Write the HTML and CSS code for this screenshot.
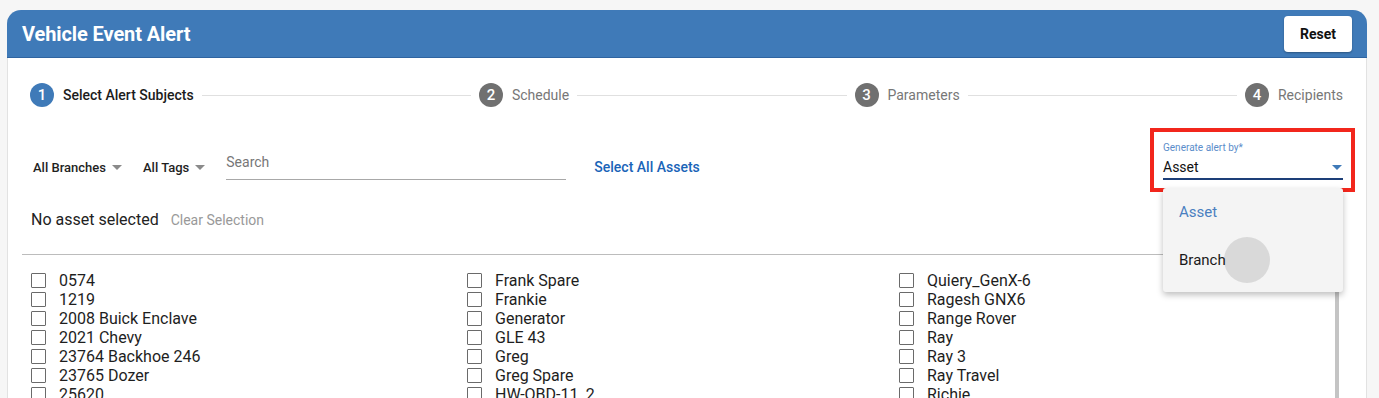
FILE: index.html
```html
<!DOCTYPE html>
<html lang="en">
<head>
<meta charset="UTF-8">
<title>Vehicle Event Alert</title>
<link rel="stylesheet" href="styles.css">
</head>
<body>

<div class="card">
    <div class="card-header">
        <h1 class="title">Vehicle Event Alert</h1>
        <button class="reset">Reset</button>
    </div>

    <div class="stepper">
        <div class="step active"><span class="step-num">1</span>Select Alert Subjects</div>
        <div class="step-line"></div>
        <div class="step"><span class="step-num">2</span>Schedule</div>
        <div class="step-line"></div>
        <div class="step"><span class="step-num">3</span>Parameters</div>
        <div class="step-line"></div>
        <div class="step"><span class="step-num">4</span>Recipients</div>
    </div>

    <div class="filters">
        <div class="filter-left">
            <div class="picker">All Branches <span class="caret"></span></div>
            <div class="picker">All Tags <span class="caret"></span></div>
            <input type="text" class="search" placeholder="Search">
            <a class="select-all" href="#">Select All Assets</a>
        </div>

        <div class="highlight">
            <div class="field">
                <label class="field-label">Generate alert by*</label>
                <div class="field-value">Asset <span class="caret blue"></span></div>
                <ul class="menu">
                    <li class="menu-item selected">Asset</li>
                    <li class="menu-item"><span class="ripple"></span><span class="menu-text">Branch</span></li>
                </ul>
            </div>
        </div>
    </div>

    <div class="selection">
        <span class="sel-text">No asset selected</span>
        <span class="clear">Clear Selection</span>
    </div>

    <div class="divider"></div>

    <div class="list-wrap">
        <div class="asset-list" id="assetList"></div>
        <div class="scroll-thumb"></div>
    </div>
</div>

<script>
const columns = [
    ['0574', '1219', '2008 Buick Enclave', '2021 Chevy', '23764 Backhoe 246', '23765 Dozer', '25620'],
    ['Frank Spare', 'Frankie', 'Generator', 'GLE 43', 'Greg', 'Greg Spare', 'HW-OBD-11_2'],
    ['Quiery_GenX-6', 'Ragesh GNX6', 'Range Rover', 'Ray', 'Ray 3', 'Ray Travel', 'Richie']
];

const list = document.getElementById('assetList');
columns.forEach(function(col) {
    const colEl = document.createElement('div');
    colEl.className = 'asset-col';
    col.forEach(function(name) {
        const row = document.createElement('label');
        row.className = 'asset';
        row.innerHTML = '<span class="box"></span><span>' + name + '</span>';
        colEl.appendChild(row);
    });
    list.appendChild(colEl);
});
</script>

</body>
</html>
```

FILE: styles.css
```css
body {
    margin: 0;
    padding: 10px 0 0 7px;
    height: 388px;
    overflow: hidden;
    background-color: #f6f6f6;
    font-family: Roboto, 'Noto Sans', Arial, sans-serif;
    color: #222;
}

.card {
    width: 1358px;
    min-height: 600px;
    background-color: #fff;
    border: 1px solid #e2e2e2;
    border-top: none;
    border-radius: 14px 14px 0 0;
}

.card-header {
    display: flex;
    align-items: center;
    justify-content: space-between;
    height: 48px;
    padding: 0 15px 0 15px;
    background-color: #3f7ab8;
    border-radius: 14px 14px 0 0;
    margin: 0 -1px;
    border-bottom: 1px solid #2f64a0;
    box-sizing: border-box;
}

.title {
    margin: 0;
    color: #fff;
    font-size: 20px;
    font-weight: 700;
    letter-spacing: -0.1px;
}

.reset {
    width: 68px;
    height: 36px;
    border: none;
    border-radius: 4px;
    background-color: #fff;
    color: #111;
    font-family: Roboto, Arial, sans-serif;
    font-size: 14px;
    font-weight: 700;
    box-shadow: 0 1px 2px rgba(0, 0, 0, 0.3);
}

/* stepper */
.stepper {
    display: flex;
    align-items: center;
    margin: 25px 23px 0 22px;
    height: 24px;
}

.step {
    display: flex;
    align-items: center;
    font-size: 14px;
    color: #777;
}

.step.active {
    color: #1c1c1c;
    font-weight: 500;
}

.step-num {
    display: inline-flex;
    align-items: center;
    justify-content: center;
    width: 24px;
    height: 24px;
    margin-right: 9px;
    border-radius: 50%;
    background-color: #707070;
    color: #fff;
    font-size: 15px;
    font-weight: 500;
}

.step.active .step-num {
    background-color: #3f7ab8;
}

.step-line {
    flex: 1;
    height: 1px;
    margin: 0 8px;
    background-color: #e0e0e0;
}

/* filters */
.filters {
    display: flex;
    align-items: center;
    justify-content: space-between;
    margin: 21px 11px 0 25px;
}

.filter-left {
    display: flex;
    align-items: center;
    margin-top: 14px;
}

.picker {
    display: flex;
    align-items: center;
    font-size: 13px;
    font-weight: 500;
    color: #1f1f1f;
    margin-right: 21px;
}

.caret {
    display: inline-block;
    width: 0;
    height: 0;
    margin-left: 6px;
    border-left: 5px solid transparent;
    border-right: 5px solid transparent;
    border-top: 5px solid #8a8a8a;
}

.caret.blue {
    border-top-color: #3f7ab8;
}

.search {
    width: 340px;
    height: 34px;
    margin: -10px 0 0 0;
    padding: 0;
    border: none;
    border-bottom: 1px solid #a8a8a8;
    font-family: Roboto, Arial, sans-serif;
    font-size: 14px;
    outline: none;
}

.search::placeholder {
    color: #777;
}

.select-all {
    margin-left: 28px;
    color: #1a64b8;
    font-size: 14px;
    font-weight: 500;
    text-decoration: none;
}

.highlight {
    position: relative;
    border: 4px solid #f2261c;
    padding: 10px 8px 8px 9px;
}

.field {
    position: relative;
    width: 180px;
}

.field-label {
    display: block;
    font-size: 10px;
    color: #5b8dca;
    line-height: 12px;
}

.field-value {
    display: flex;
    align-items: center;
    justify-content: space-between;
    height: 22px;
    padding-top: 2px;
    font-size: 14px;
    color: #111;
    border-bottom: 2px solid #1d3f78;
}

.field-value .caret {
    margin-right: 1px;
}

.menu {
    position: absolute;
    top: 46px;
    left: 0;
    width: 180px;
    margin: 0;
    padding: 0 0 8px;
    list-style: none;
    background-color: #f4f4f4;
    border-radius: 3px;
    box-shadow: 0 3px 6px rgba(0, 0, 0, 0.25);
    z-index: 2;
}

.menu-item {
    position: relative;
    height: 48px;
    line-height: 48px;
    padding-left: 16px;
    font-size: 15px;
    color: #1a1a1a;
}

.menu-item.selected {
    color: #4a7fc0;
}

.ripple {
    position: absolute;
    left: 61px;
    top: 1px;
    width: 46px;
    height: 46px;
    border-radius: 50%;
    background-color: #d9d9d9;
}

.menu-text {
    position: relative;
}

/* selection summary */
.selection {
    display: flex;
    align-items: baseline;
    margin: 18px 0 0 23px;
}

.sel-text {
    font-size: 16px;
    color: #222;
}

.clear {
    margin-left: 12px;
    font-size: 14px;
    color: #999;
}

.divider {
    height: 1px;
    margin: 25px 26px 0 14px;
    background-color: #bcbcbc;
}

/* asset list */
.list-wrap {
    display: flex;
    margin: 16px 0 0 23px;
}

.asset-list {
    display: grid;
    grid-template-columns: 436px 432px 436px;
    width: 1304px;
}

.asset-col {
    display: flex;
    flex-direction: column;
}

.asset {
    display: flex;
    align-items: center;
    height: 19px;
    font-size: 16px;
    color: #1e1e1e;
}

.box {
    width: 13px;
    height: 13px;
    margin-right: 13px;
    border: 1px solid #6a6a6a;
    border-radius: 1px;
}

.scroll-thumb {
    width: 4px;
    height: 200px;
    background-color: #c4c4c4;
}
```
